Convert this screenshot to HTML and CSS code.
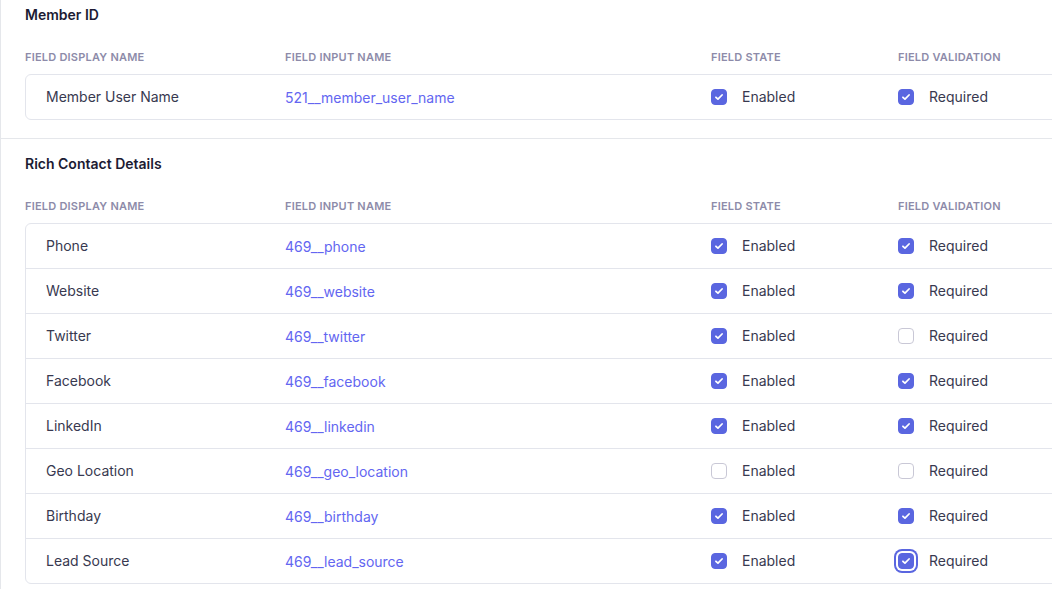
FILE: index.html
```html
<!DOCTYPE html>
<html lang="en">
<head>
    <meta charset="UTF-8">
    <title>Member Fields</title>
    <link rel="stylesheet" href="styles.css">
</head>
<body>

<div class="panel">
    <div class="section section-first">
        <h2 class="section-title">Member ID</h2>
        <div class="field-head">
            <span>Field Display Name</span>
            <span>Field Input Name</span>
            <span>Field State</span>
            <span>Field Validation</span>
        </div>
        <div class="field-card">
            <div class="field-row">
                <span class="field-name">Member User Name</span>
                <span class="field-input">521__member_user_name</span>
                <span class="check-cell"><span class="box on"></span>Enabled</span>
                <span class="check-cell"><span class="box on"></span>Required</span>
            </div>
        </div>
    </div>

    <div class="section">
        <h2 class="section-title">Rich Contact Details</h2>
        <div class="field-head">
            <span>Field Display Name</span>
            <span>Field Input Name</span>
            <span>Field State</span>
            <span>Field Validation</span>
        </div>
        <div class="field-card">
            <div class="field-row">
                <span class="field-name">Phone</span>
                <span class="field-input">469__phone</span>
                <span class="check-cell"><span class="box on"></span>Enabled</span>
                <span class="check-cell"><span class="box on"></span>Required</span>
            </div>
            <div class="field-row">
                <span class="field-name">Website</span>
                <span class="field-input">469__website</span>
                <span class="check-cell"><span class="box on"></span>Enabled</span>
                <span class="check-cell"><span class="box on"></span>Required</span>
            </div>
            <div class="field-row">
                <span class="field-name">Twitter</span>
                <span class="field-input">469__twitter</span>
                <span class="check-cell"><span class="box on"></span>Enabled</span>
                <span class="check-cell"><span class="box"></span>Required</span>
            </div>
            <div class="field-row">
                <span class="field-name">Facebook</span>
                <span class="field-input">469__facebook</span>
                <span class="check-cell"><span class="box on"></span>Enabled</span>
                <span class="check-cell"><span class="box on"></span>Required</span>
            </div>
            <div class="field-row">
                <span class="field-name">LinkedIn</span>
                <span class="field-input">469__linkedin</span>
                <span class="check-cell"><span class="box on"></span>Enabled</span>
                <span class="check-cell"><span class="box on"></span>Required</span>
            </div>
            <div class="field-row">
                <span class="field-name">Geo Location</span>
                <span class="field-input">469__geo_location</span>
                <span class="check-cell"><span class="box"></span>Enabled</span>
                <span class="check-cell"><span class="box"></span>Required</span>
            </div>
            <div class="field-row">
                <span class="field-name">Birthday</span>
                <span class="field-input">469__birthday</span>
                <span class="check-cell"><span class="box on"></span>Enabled</span>
                <span class="check-cell"><span class="box on"></span>Required</span>
            </div>
            <div class="field-row">
                <span class="field-name">Lead Source</span>
                <span class="field-input">469__lead_source</span>
                <span class="check-cell"><span class="box on"></span>Enabled</span>
                <span class="check-cell"><span class="box on focus"></span>Required</span>
            </div>
        </div>
    </div>
</div>

</body>
</html>
```

FILE: styles.css
```css
body {
    margin: 0;
    background-color: #fff;
    font-family: Inter, "Noto Sans", sans-serif;
    overflow: hidden;
}

.panel {
    width: 1120px;
    border-left: 1px solid #e5e7eb;
    min-height: 100vh;
}

.section {
    padding: 15px 0 18px 24px;
    border-bottom: 1px solid #e5e7eb;
}

.section-first {
    padding-top: 5px;
}

.section-title {
    margin: 0;
    font-size: 14px;
    line-height: 20px;
    font-weight: 600;
    color: #1c1b33;
}

.field-head {
    display: grid;
    grid-template-columns: 260px 426px 187px 1fr;
    margin-top: 24px;
    margin-bottom: 9px;
    font-size: 11px;
    line-height: 16px;
    font-weight: 600;
    letter-spacing: 0.02em;
    text-transform: uppercase;
    color: #8d8ba9;
}

.field-card {
    border: 1px solid #e3e5ec;
    border-radius: 6px;
}

.field-row {
    display: grid;
    grid-template-columns: 239px 426px 187px 1fr;
    align-items: center;
    height: 44px;
    padding-left: 20px;
    font-size: 14px;
    color: #383950;
}

.field-row + .field-row {
    border-top: 1px solid #e3e5ec;
}

.field-name {
    padding-bottom: 1px;
}

.field-input {
    color: #6366f1;
    padding-top: 1px;
}

.check-cell {
    display: flex;
    align-items: center;
    gap: 15px;
    padding-bottom: 1px;
}

.box {
    box-sizing: border-box;
    width: 16px;
    height: 16px;
    border: 1px solid #c9c8d6;
    border-radius: 4px;
    background-color: #fff;
}

.box.on {
    border-color: #5a66e0;
    background-color: #5a66e0;
    background-image: url("data:image/svg+xml,%3Csvg xmlns='http://www.w3.org/2000/svg' viewBox='0 0 16 16'%3E%3Cpath d='M4.5 8.3l2.3 2.2 4.7-4.8' fill='none' stroke='white' stroke-width='2' stroke-linecap='round' stroke-linejoin='round'/%3E%3C/svg%3E");
}

.box.focus {
    box-shadow: 0 0 0 2px #fff, 0 0 0 4px #5a66e0;
}
```
